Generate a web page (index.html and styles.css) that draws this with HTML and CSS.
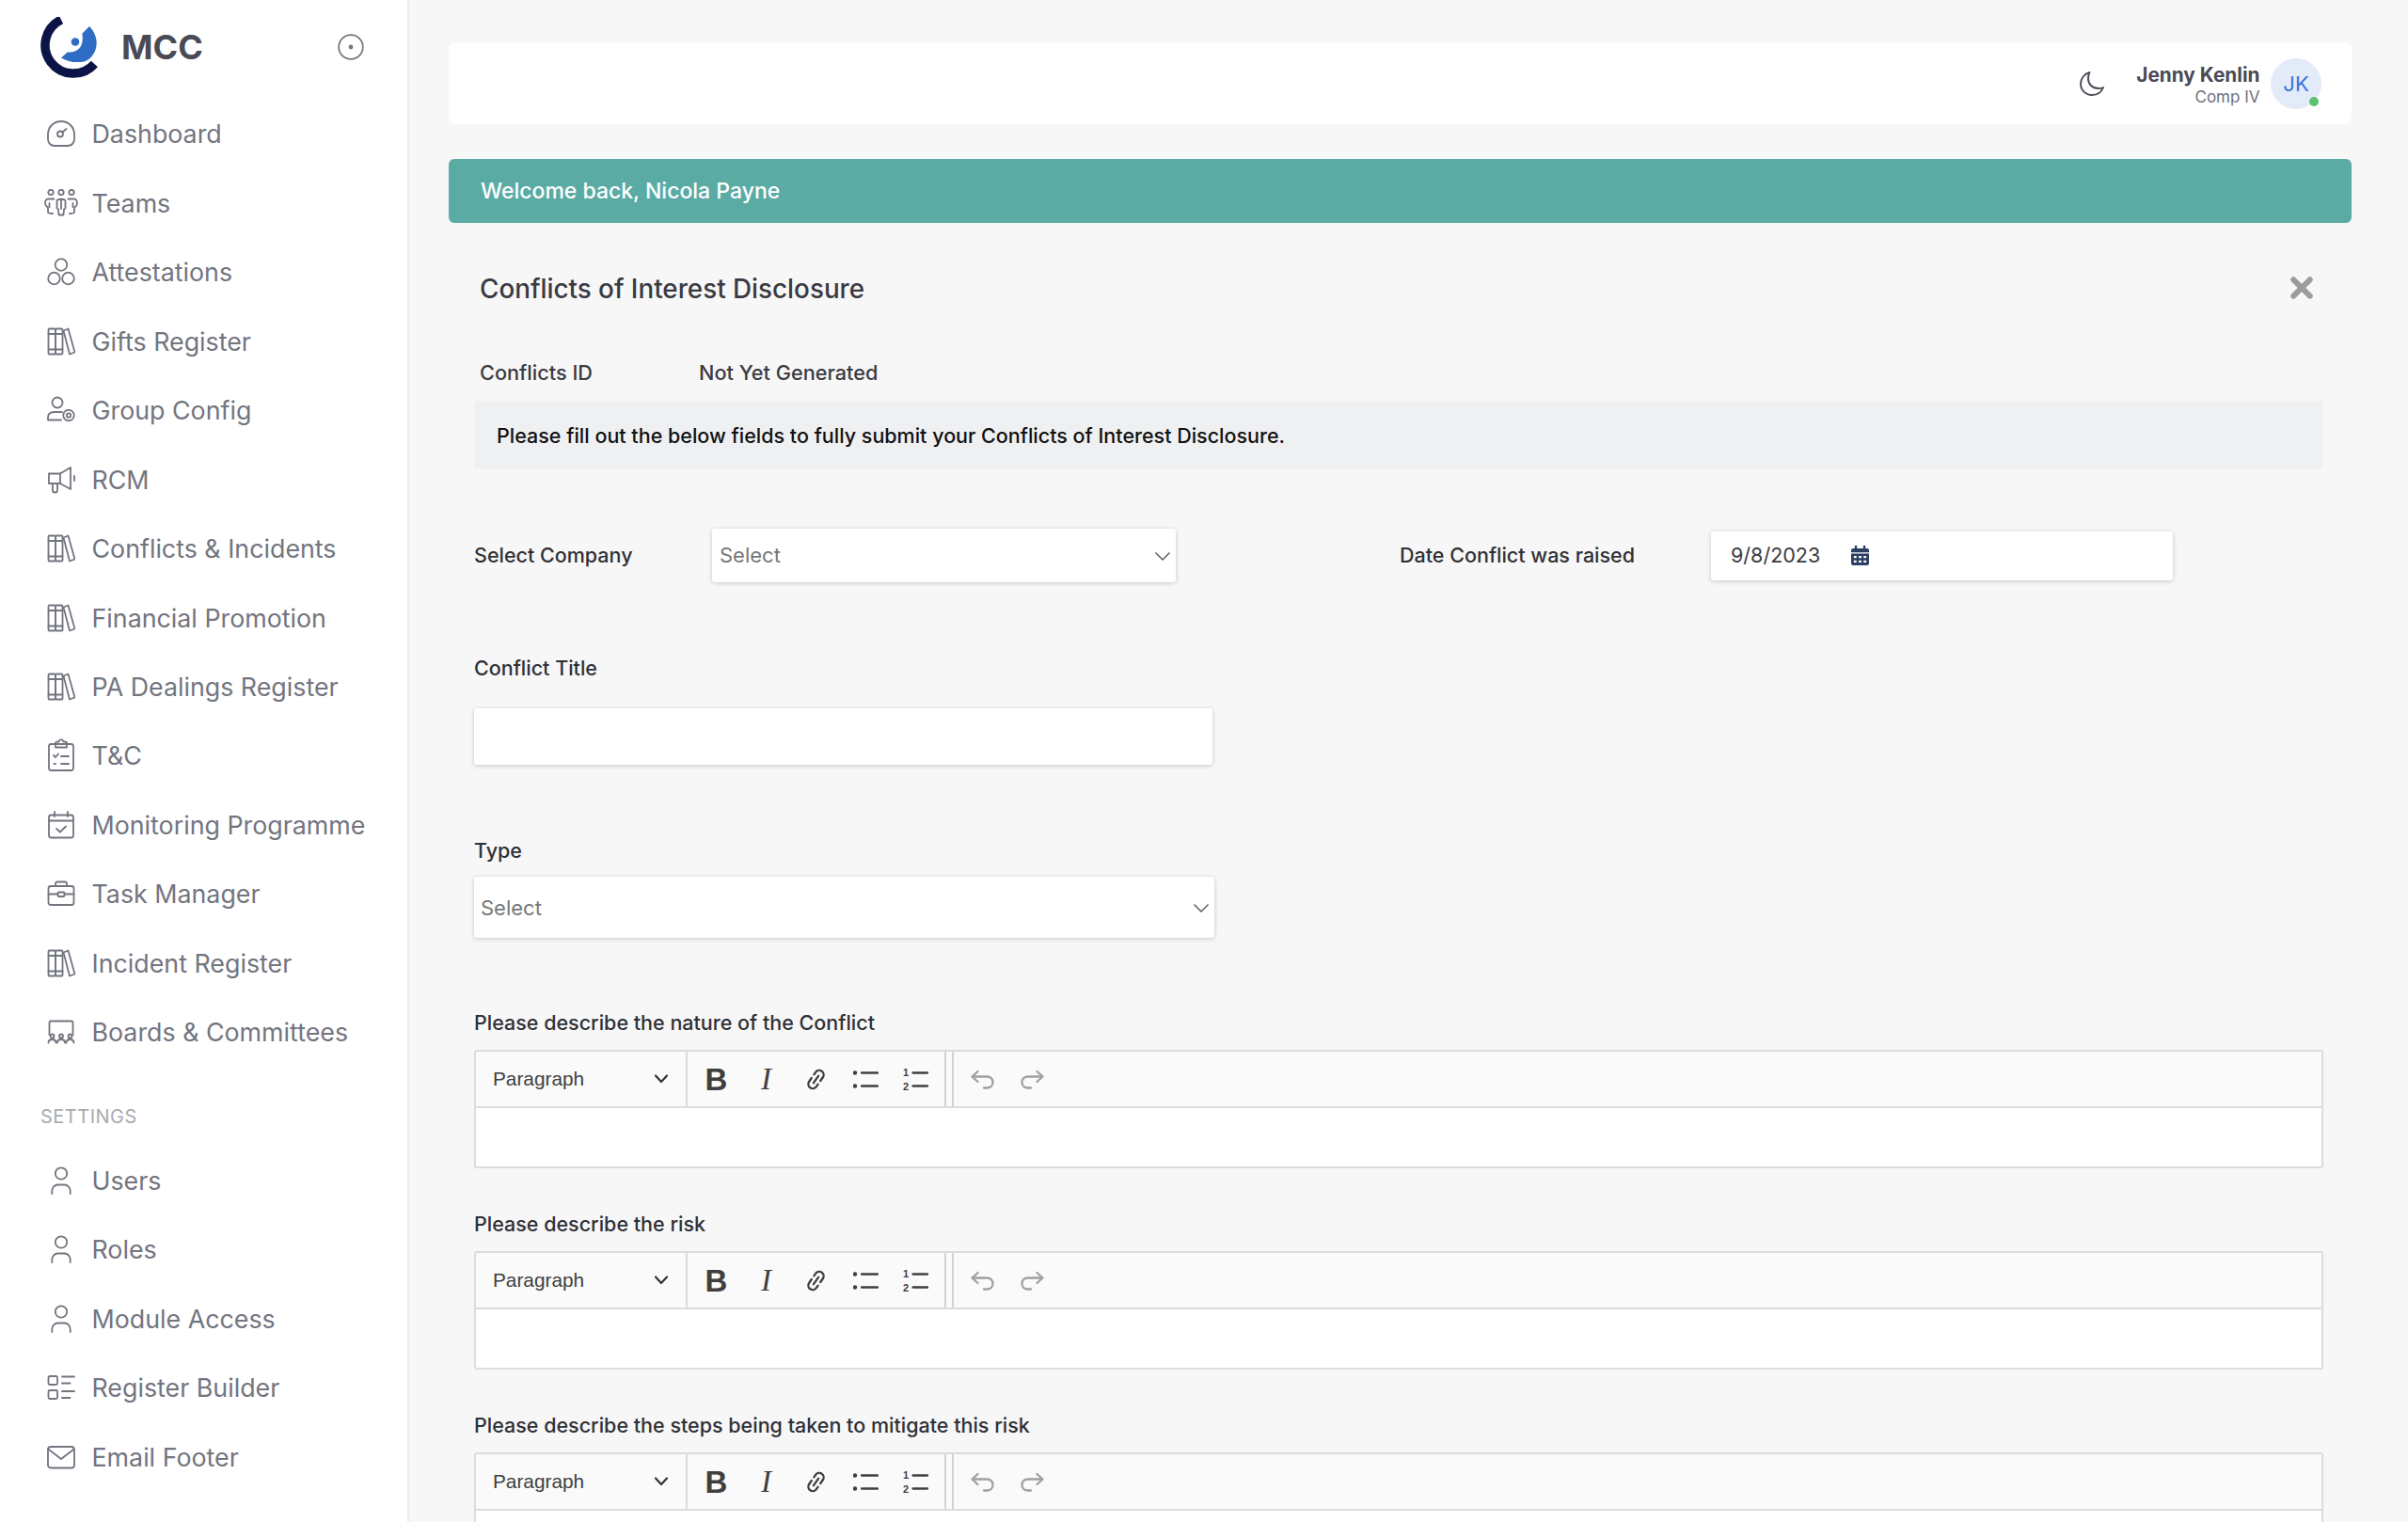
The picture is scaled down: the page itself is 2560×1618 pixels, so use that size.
FILE: index.html
```html
<!DOCTYPE html>
<html lang="en">
<head>
    <meta charset="UTF-8">
    <meta name="viewport" content="width=device-width, initial-scale=1.0">
    <title>Conflicts of Interest Disclosure - MCC</title>
    <link rel="stylesheet" href="styles.css">
</head>
<body>
    <svg class="icon-defs" width="0" height="0">
        <symbol id="i-dash" viewBox="0 0 30 30"><path d="M8 28H22C26 28 29 25 29 21V16C29 8 23 2 15 2S1 8 1 16V21C1 25 4 28 8 28z"/><circle cx="14" cy="15.500" r="3"/><path d="M16.500 13.500l4-3.500"/></symbol>
        <symbol id="i-teams" viewBox="0 0 36 30"><circle cx="7" cy="3.500" r="2.700"/><circle cx="18" cy="3.500" r="2.700"/><circle cx="29" cy="3.500" r="2.700"/><path d="M13.500 13c0-3 9-3 9 0v7c0 1-1 1-1.500 1.500l-.5 6h-5l-.5-6C15 21 13.500 21 13.500 20zM18 12v9"/><path d="M10.500 10.500H4c-2.500 0-3.500 3-2.500 6.500.5 1.500 2.500 2 2.500 3v4.500c0 1 1 1.500 5 1.500M5.500 15v4M25.500 10.500H32c2.500 0 3.500 3 2.500 6.500-.5 1.500-2.500 2-2.500 3v4.500c0 1-1 1.500-5 1.500M30.500 15v4"/></symbol>
        <symbol id="i-attest" viewBox="0 0 30 30"><circle cx="15" cy="7.500" r="6.300"/><circle cx="7.500" cy="22" r="6.300"/><circle cx="22.500" cy="22" r="6.300"/></symbol>
        <symbol id="i-books" viewBox="0 0 30 30"><rect x="1.500" y="1.500" width="7.500" height="27" rx="1"/><rect x="9" y="1.500" width="7.500" height="27" rx="1"/><path d="M1.500 7h15M1.500 23.500h15"/><path d="M17.500 3.500l5-2 7 25-5.500 2z"/></symbol>
        <symbol id="i-group" viewBox="0 0 30 30"><circle cx="11" cy="7" r="5.500"/><path d="M1 25v-2c0-4 3-6 7-6h8M1 25.500h14"/><circle cx="23" cy="20.500" r="5.700" stroke-dasharray="3 1.400"/><circle cx="23" cy="20.500" r="2.200"/></symbol>
        <symbol id="i-mega" viewBox="0 0 30 30"><path d="M25 2v23l-11-6H2V8.500h12z"/><path d="M14 8.500V19M6 19v7.500c0 1.500 1 2 2.500 2s2.500-.5 2.500-2V19M29 11v5"/></symbol>
        <symbol id="i-clip" viewBox="0 0 30 36"><rect x="2" y="6" width="26" height="28" rx="2.500"/><path d="M9 9.500V5c0-1 1-1.500 2-1.500h1.500C13 2 14 1.200 15 1.200s2 .8 2.500 2.300H19c1 0 2 .5 2 1.500v4.500z"/><path d="M7 18l2 2 3-3.500M15 19h8M7.500 27h1.500M15 27h8"/></symbol>
        <symbol id="i-cal" viewBox="0 0 30 30"><rect x="2" y="4.500" width="26" height="24" rx="2.500"/><path d="M2 10.500h26M8 1v5M22 1v5M10 19l4 3.500 6-6"/></symbol>
        <symbol id="i-case" viewBox="0 0 30 30"><rect x="1.500" y="7" width="27" height="20" rx="2.500"/><path d="M9 7V4.500C9 3 10 2.500 11 2.500h8c1 0 2 .5 2 2V7M1.500 15.500h10M18.500 15.500h10"/><rect x="11.500" y="13.500" width="7" height="4.500" rx="1"/></symbol>
        <symbol id="i-board" viewBox="0 0 30 30"><path d="M2.500 18V5c0-1 .5-1.500 1.500-1.500h22c1 0 1.500 .5 1.500 1.500v13"/><circle cx="5.500" cy="19.500" r="2"/><circle cx="15" cy="19.500" r="2"/><circle cx="24.500" cy="19.500" r="2"/><path d="M1.500 26.500c0-2.500 1.500-3.500 4-3.500s4 1 4 3.500M11 26.500c0-2.500 1.500-3.500 4-3.500s4 1 4 3.500M20.500 26.500c0-2.500 1.500-3.500 4-3.500s4 1 4 3.500"/></symbol>
        <symbol id="i-user" viewBox="0 0 30 30"><circle cx="15" cy="7.500" r="6.200"/><path d="M5.300 29v-3c0-3.500 3-6.500 6-6.500h7.400c3 0 6 3 6 6.500v3"/></symbol>
        <symbol id="i-builder" viewBox="0 0 30 30"><rect x="1.500" y="3" width="9.500" height="9" rx="1.500"/><rect x="1.500" y="18" width="9.500" height="9" rx="1.500"/><path d="M16 3.500h13M16 10.500h8.500M16 19h13M16 26h8.500"/></symbol>
        <symbol id="i-mail" viewBox="0 0 30 30"><rect x="1" y="4" width="28" height="22.500" rx="3"/><path d="M2 7l13 10L28 7"/></symbol>

        <symbol id="t-chain" viewBox="0 0 27 27"><g transform="rotate(-55 13.500 13.500)"><path d="M12 8.800H7.500a4.700 4.700 0 0 0 0 9.400h3"/><path d="M15 18.200h4.500a4.700 4.700 0 0 0 0-9.400h-3"/><path d="M9 13.500h9"/></g></symbol>
        <symbol id="t-bullets" viewBox="0 0 27 27"><circle cx="2" cy="6.500" r="2.200" fill="currentColor" stroke="none"/><circle cx="2" cy="20.500" r="2.200" fill="currentColor" stroke="none"/><path d="M9 6.500h17M9 20.500h17"/></symbol>
        <symbol id="t-undo" viewBox="0 0 27 27"><path d="M8.500 5L2.500 10.500 8.500 16"/><path d="M3 10.500h15c4 0 6.500 2.500 6.500 6s-2.500 6-6.500 6h-3"/></symbol>
        <symbol id="t-redo" viewBox="0 0 27 27"><path d="M18.500 5l6 5.500-6 5.500"/><path d="M24 10.500H9c-4 0-6.500 2.500-6.500 6s2.500 6 6.500 6h3"/></symbol>
        <symbol id="t-chev" viewBox="0 0 16 16"><path d="M2 4.500l6 6.500 6-6.500"/></symbol>
        <symbol id="s-chev" viewBox="0 0 16 16"><path d="M.5 4.500L8 12l7.500-7.500"/></symbol>
    </svg>

    <div class="app">
        <aside class="sidebar">
            <div class="brand">
                <svg class="brand-logo" viewBox="0 0 65 65">
                    <path d="M22 3A30 30 0 1 0 57.400 50" fill="none" stroke="#0c1447" stroke-width="9.500"/>
                    <path d="M52 10C57 15 60 22 59.700 28.400 59 40 51 48 42 48 35 48.500 28 47 22 43.400L28.700 37.400C36 38 42 35 44 28.400 45 25 45 21 44.300 17.700z" fill="#2f6cc4"/>
                    <circle cx="37" cy="26.500" r="4.300" fill="#2f6cc4"/>
                </svg>
                <span class="brand-name">MCC</span>
                <svg class="brand-pin" viewBox="0 0 28 28"><circle cx="14" cy="14" r="12.800"/><circle cx="14" cy="14" r="2.400" class="pin-dot"/></svg>
            </div>
            <nav class="nav">
                <a class="nav-item"><svg class="nav-icon"><use href="#i-dash"/></svg>Dashboard</a>
                <a class="nav-item"><svg class="nav-icon wide"><use href="#i-teams"/></svg>Teams</a>
                <a class="nav-item"><svg class="nav-icon"><use href="#i-attest"/></svg>Attestations</a>
                <a class="nav-item"><svg class="nav-icon"><use href="#i-books"/></svg>Gifts Register</a>
                <a class="nav-item"><svg class="nav-icon"><use href="#i-group"/></svg>Group Config</a>
                <a class="nav-item"><svg class="nav-icon"><use href="#i-mega"/></svg>RCM</a>
                <a class="nav-item"><svg class="nav-icon"><use href="#i-books"/></svg>Conflicts &amp; Incidents</a>
                <a class="nav-item"><svg class="nav-icon"><use href="#i-books"/></svg>Financial Promotion</a>
                <a class="nav-item"><svg class="nav-icon"><use href="#i-books"/></svg>PA Dealings Register</a>
                <a class="nav-item"><svg class="nav-icon tall"><use href="#i-clip"/></svg>T&amp;C</a>
                <a class="nav-item"><svg class="nav-icon"><use href="#i-cal"/></svg>Monitoring Programme</a>
                <a class="nav-item"><svg class="nav-icon"><use href="#i-case"/></svg>Task Manager</a>
                <a class="nav-item"><svg class="nav-icon"><use href="#i-books"/></svg>Incident Register</a>
                <a class="nav-item"><svg class="nav-icon"><use href="#i-board"/></svg>Boards &amp; Committees</a>
                <div class="nav-heading">SETTINGS</div>
                <a class="nav-item"><svg class="nav-icon"><use href="#i-user"/></svg>Users</a>
                <a class="nav-item"><svg class="nav-icon"><use href="#i-user"/></svg>Roles</a>
                <a class="nav-item"><svg class="nav-icon"><use href="#i-user"/></svg>Module Access</a>
                <a class="nav-item"><svg class="nav-icon"><use href="#i-builder"/></svg>Register Builder</a>
                <a class="nav-item"><svg class="nav-icon"><use href="#i-mail"/></svg>Email Footer</a>
            </nav>
        </aside>

        <main class="main">
            <header class="topbar">
                <svg class="moon" viewBox="0 0 28 28"><path d="M11.500 2C6 3.500 2 8.500 2 14c0 7 5.500 12 12 12 5.500 0 10-3 12-8-1.500 .8-3.500 1-5 1-6.500 0-11-4.500-11-10.500 0-2.500.5-4.500 1.500-6.500z"/></svg>
                <div class="user-text">
                    <div class="user-name">Jenny Kenlin</div>
                    <div class="user-role">Comp IV</div>
                </div>
                <div class="avatar">JK<span class="avatar-status"></span></div>
            </header>

            <div class="welcome">Welcome back, Nicola Payne</div>

            <div class="form-head">
                <h1 class="form-title">Conflicts of Interest Disclosure</h1>
                <svg class="close" viewBox="0 0 22 22"><path d="M3 3l16 16M19 3L3 19"/></svg>
            </div>

            <section class="form">
                <div class="meta"><span class="meta-label">Conflicts ID</span><span>Not Yet Generated</span></div>
                <div class="notice">Please fill out the below fields to fully submit your Conflicts of Interest Disclosure.</div>

                <div class="inline-row">
                    <label class="label company-label">Select Company</label>
                    <div class="select company-select">Select<svg class="select-chev"><use href="#s-chev"/></svg></div>
                    <label class="label date-label">Date Conflict was raised</label>
                    <div class="date-box">
                        <span class="date-value">9/8/2023</span>
                        <svg class="date-icon" viewBox="0 0 20 22"><path d="M4 0h2.500v3H13.500V0H16v3h2c1 0 2 1 2 2v2.500H0V5c0-1 1-2 2-2h2zM0 9h20v11c0 1-1 2-2 2H2c-1 0-2-1-2-2zm3 2.500v2.500h3v-2.500zm5.500 0v2.500h3v-2.500zm5.500 0v2.500h3v-2.500zm-11 5v2.500h3v-2.500zm5.500 0v2.500h3v-2.500zm5.500 0v2.500h3v-2.500z" fill-rule="evenodd"/></svg>
                    </div>
                </div>

                <label class="label field-label title-label">Conflict Title</label>
                <input class="text-input" type="text">

                <label class="label field-label type-label">Type</label>
                <div class="select type-select">Select<svg class="select-chev"><use href="#s-chev"/></svg></div>

                <label class="label field-label editor-label first">Please describe the nature of the Conflict</label>
                <div class="editor">
                    <div class="toolbar">
                        <div class="tb-style">Paragraph<svg class="tb-chev"><use href="#t-chev"/></svg></div>
                        <div class="tb-group">
                            <span class="tb-btn tb-bold">B</span>
                            <span class="tb-btn tb-italic">I</span>
                            <svg class="tb-btn tb-svg"><use href="#t-chain"/></svg>
                            <svg class="tb-btn tb-svg"><use href="#t-bullets"/></svg>
                            <svg class="tb-btn tb-svg" viewBox="0 0 27 27"><text x="0" y="9.500" class="tb-num">1</text><text x="0" y="25" class="tb-num">2</text><path d="M10.500 6.500h15.500M10.500 20.500h15.500"/></svg>
                        </div>
                        <div class="tb-group tb-history">
                            <svg class="tb-btn tb-svg"><use href="#t-undo"/></svg>
                            <svg class="tb-btn tb-svg"><use href="#t-redo"/></svg>
                        </div>
                    </div>
                    <div class="editor-body"></div>
                </div>

                <label class="label field-label editor-label">Please describe the risk</label>
                <div class="editor">
                    <div class="toolbar">
                        <div class="tb-style">Paragraph<svg class="tb-chev"><use href="#t-chev"/></svg></div>
                        <div class="tb-group">
                            <span class="tb-btn tb-bold">B</span>
                            <span class="tb-btn tb-italic">I</span>
                            <svg class="tb-btn tb-svg"><use href="#t-chain"/></svg>
                            <svg class="tb-btn tb-svg"><use href="#t-bullets"/></svg>
                            <svg class="tb-btn tb-svg" viewBox="0 0 27 27"><text x="0" y="9.500" class="tb-num">1</text><text x="0" y="25" class="tb-num">2</text><path d="M10.500 6.500h15.500M10.500 20.500h15.500"/></svg>
                        </div>
                        <div class="tb-group tb-history">
                            <svg class="tb-btn tb-svg"><use href="#t-undo"/></svg>
                            <svg class="tb-btn tb-svg"><use href="#t-redo"/></svg>
                        </div>
                    </div>
                    <div class="editor-body"></div>
                </div>

                <label class="label field-label editor-label">Please describe the steps being taken to mitigate this risk</label>
                <div class="editor">
                    <div class="toolbar">
                        <div class="tb-style">Paragraph<svg class="tb-chev"><use href="#t-chev"/></svg></div>
                        <div class="tb-group">
                            <span class="tb-btn tb-bold">B</span>
                            <span class="tb-btn tb-italic">I</span>
                            <svg class="tb-btn tb-svg"><use href="#t-chain"/></svg>
                            <svg class="tb-btn tb-svg"><use href="#t-bullets"/></svg>
                            <svg class="tb-btn tb-svg" viewBox="0 0 27 27"><text x="0" y="9.500" class="tb-num">1</text><text x="0" y="25" class="tb-num">2</text><path d="M10.500 6.500h15.500M10.500 20.500h15.500"/></svg>
                        </div>
                        <div class="tb-group tb-history">
                            <svg class="tb-btn tb-svg"><use href="#t-undo"/></svg>
                            <svg class="tb-btn tb-svg"><use href="#t-redo"/></svg>
                        </div>
                    </div>
                    <div class="editor-body"></div>
                </div>
            </section>
        </main>
    </div>
</body>
</html>
```

FILE: styles.css
```css
* {
    margin: 0;
    padding: 0;
    box-sizing: border-box;
}

html,
body {
    height: 1618px;
    overflow: hidden;
}

body {
    background: #f7f7f7;
    color: #2b2b33;
    font-family: Inter, "Noto Sans", sans-serif;
}

.icon-defs {
    position: absolute;
}

.app {
    display: flex;
    height: 1618px;
}

/* sidebar */
.sidebar {
    width: 435px;
    flex: none;
    background: #fff;
    border-right: 2px solid #ececec;
}

.brand {
    display: flex;
    align-items: center;
    height: 105.500px;
    padding: 0 0 5px 43px;
}

.brand-logo {
    width: 65px;
    height: 65px;
}

.brand-name {
    margin-left: 21px;
    font-size: 36px;
    font-weight: 700;
    color: #4a4a56;
}

.brand-pin {
    width: 28px;
    height: 28px;
    margin-left: 143px;
    fill: none;
    stroke: #77787f;
    stroke-width: 1.800;
}

.pin-dot {
    fill: #77787f;
    stroke: none;
}

.nav-item {
    display: flex;
    align-items: center;
    height: 73.470px;
    padding-left: 50px;
    font-size: 26.800px;
    color: #73757f;
    white-space: nowrap;
}

.nav-icon {
    width: 30px;
    height: 30px;
    margin-right: 17.500px;
    flex: none;
    fill: none;
    stroke: #73757f;
    stroke-width: 1.800;
    stroke-linecap: round;
    stroke-linejoin: round;
}

.nav-icon.wide {
    width: 36px;
    margin-left: -3px;
    margin-right: 14.500px;
}

.nav-icon.tall {
    height: 36px;
}

.nav-heading {
    height: 84px;
    padding: 41px 0 0 43px;
    font-size: 20px;
    line-height: 24px;
    letter-spacing: 0.500px;
    color: #a9abb1;
}

/* top of the main column */
.main {
    flex: 1;
    min-width: 0;
    padding: 45px 60px 0 42px;
}

.topbar {
    display: flex;
    align-items: center;
    justify-content: flex-end;
    height: 87px;
    padding-right: 32px;
    background: #fff;
    border-radius: 8px;
}

.moon {
    width: 28px;
    height: 28px;
    margin-right: 33px;
    fill: none;
    stroke: #4c4c56;
    stroke-width: 1.900;
    stroke-linejoin: round;
}

.user-text {
    padding-top: 2px;
    text-align: right;
    margin-right: 11.500px;
}

.user-name {
    font-size: 20.800px;
    font-weight: 700;
    line-height: 26px;
    color: #4a4a56;
}

.user-role {
    font-size: 17px;
    line-height: 20px;
    color: #6e6f79;
}

.avatar {
    position: relative;
    display: flex;
    align-items: center;
    justify-content: center;
    width: 54px;
    height: 54px;
    border-radius: 50%;
    background: #e3ebf9;
    font-size: 22px;
    color: #3b73d9;
}

.avatar-status {
    position: absolute;
    right: 3px;
    bottom: 3px;
    width: 10px;
    height: 10px;
    border-radius: 50%;
    background: #5cc26f;
}

.welcome {
    display: flex;
    align-items: center;
    height: 68px;
    margin-top: 37px;
    padding: 0 0 1px 34px;
    background: #5baba5;
    border-radius: 6px;
    font-size: 23px;
    font-weight: 500;
    color: #fff;
}

.form-head {
    display: flex;
    align-items: center;
    justify-content: space-between;
    height: 60px;
    margin-top: 40px;
    padding: 0 41px 0 33px;
}

.form-title {
    font-size: 27.800px;
    font-weight: 500;
    color: #3a3a42;
}

.close {
    width: 24px;
    height: 24px;
    margin-bottom: 2px;
    fill: none;
    stroke: #9c9c9c;
    stroke-width: 5.500;
    stroke-linecap: round;
}

/* form */
.form {
    padding: 0 30px 0 27px;
    font-size: 21.500px;
    font-weight: 500;
}

.meta {
    display: flex;
    align-items: center;
    height: 30px;
    margin-top: 44px;
    padding-left: 6px;
    font-size: 21.700px;
    color: #3b3b42;
}

.meta-label {
    width: 233px;
}

.notice {
    display: flex;
    align-items: center;
    height: 73px;
    margin-top: 15px;
    padding-left: 24px;
    background: #eff0f2;
    border-radius: 4px;
    color: #111;
}

.inline-row {
    display: flex;
    align-items: center;
    height: 57px;
    margin-top: 63px;
}

.label {
    display: block;
    color: #303036;
}

.company-label {
    width: 253px;
    padding-bottom: 2px;
}

.select {
    position: relative;
    display: flex;
    align-items: center;
    background: #fff;
    border-radius: 3px;
    box-shadow: 0 1px 5px rgba(0, 0, 0, 0.2);
    font-size: 22px;
    font-weight: 400;
    color: #777;
}

.company-select {
    width: 493px;
    height: 57px;
    padding: 0 0 2px 8px;
}

.select-chev {
    position: absolute;
    top: 50%;
    right: 6px;
    width: 16px;
    height: 16px;
    margin-top: -8px;
    fill: none;
    stroke: #555;
    stroke-width: 1.400;
}

.date-label {
    width: 331px;
    margin-left: 238px;
    padding-bottom: 2px;
}

.date-box {
    display: flex;
    align-items: center;
    width: 491px;
    height: 52px;
    padding: 0 0 1px 21px;
    background: #fff;
    border-radius: 3px;
    box-shadow: 0 1px 5px rgba(0, 0, 0, 0.2);
}

.date-value {
    width: 128px;
    font-weight: 400;
    color: #3b3b42;
}

.date-icon {
    width: 19px;
    height: 21px;
    fill: #2c3e63;
}

.field-label {
    height: 30px;
    line-height: 30px;
}

.title-label {
    margin-top: 76px;
    margin-bottom: 28px;
}

.text-input {
    display: block;
    width: 785px;
    height: 60px;
    border: 0;
    background: #fff;
    border-radius: 3px;
    box-shadow: 0 1px 5px rgba(0, 0, 0, 0.2);
}

.type-label {
    margin-top: 76px;
    margin-bottom: 13px;
}

.type-select {
    width: 787px;
    height: 65px;
    padding-left: 7px;
}

.editor-label {
    margin-top: 44px;
    margin-bottom: 14px;
}

.editor-label.first {
    margin-top: 75px;
}

/* rich text editor */
.editor {
    border: 2px solid #dcdcdc;
    border-radius: 3px;
    background: #fff;
}

.toolbar {
    display: flex;
    height: 60px;
    background: #fafafa;
    border-bottom: 2px solid #dcdcdc;
    color: #3f3f3f;
}

.tb-style {
    display: flex;
    align-items: center;
    justify-content: space-between;
    width: 225px;
    padding: 0 18px 0 18px;
    border-right: 2px solid #dcdcdc;
    font-family: "Liberation Sans", Arial, sans-serif;
    font-size: 20.800px;
    font-weight: 400;
}

.tb-chev {
    width: 16px;
    height: 16px;
    fill: none;
    stroke: #333;
    stroke-width: 2.200;
    stroke-linecap: round;
    stroke-linejoin: round;
}

.tb-group {
    display: flex;
    align-items: center;
    gap: 26px;
    width: 275px;
    padding-left: 17px;
    border-right: 2px solid #d2d2d2;
}

.tb-history {
    width: auto;
    margin-left: 6px;
    padding-left: 17px;
    border-right: 0;
    border-left: 2px solid #d2d2d2;
    color: #a0a0a0;
}

.tb-btn {
    display: block;
    width: 27px;
    height: 27px;
    flex: none;
    overflow: visible;
    text-align: center;
    line-height: 27px;
}

.tb-bold {
    font-family: "Liberation Sans", Arial, sans-serif;
    font-size: 33px;
    font-weight: 700;
}

.tb-italic {
    font-family: "Liberation Serif", serif;
    font-size: 33px;
    font-weight: 400;
    font-style: italic;
}

.tb-svg {
    fill: none;
    stroke: currentColor;
    stroke-width: 2.300;
    stroke-linecap: round;
    stroke-linejoin: round;
}

.tb-num {
    fill: currentColor;
    stroke: none;
    font-family: "Liberation Sans", Arial, sans-serif;
    font-size: 11px;
    font-weight: 700;
}

.editor-body {
    height: 62px;
}
```
